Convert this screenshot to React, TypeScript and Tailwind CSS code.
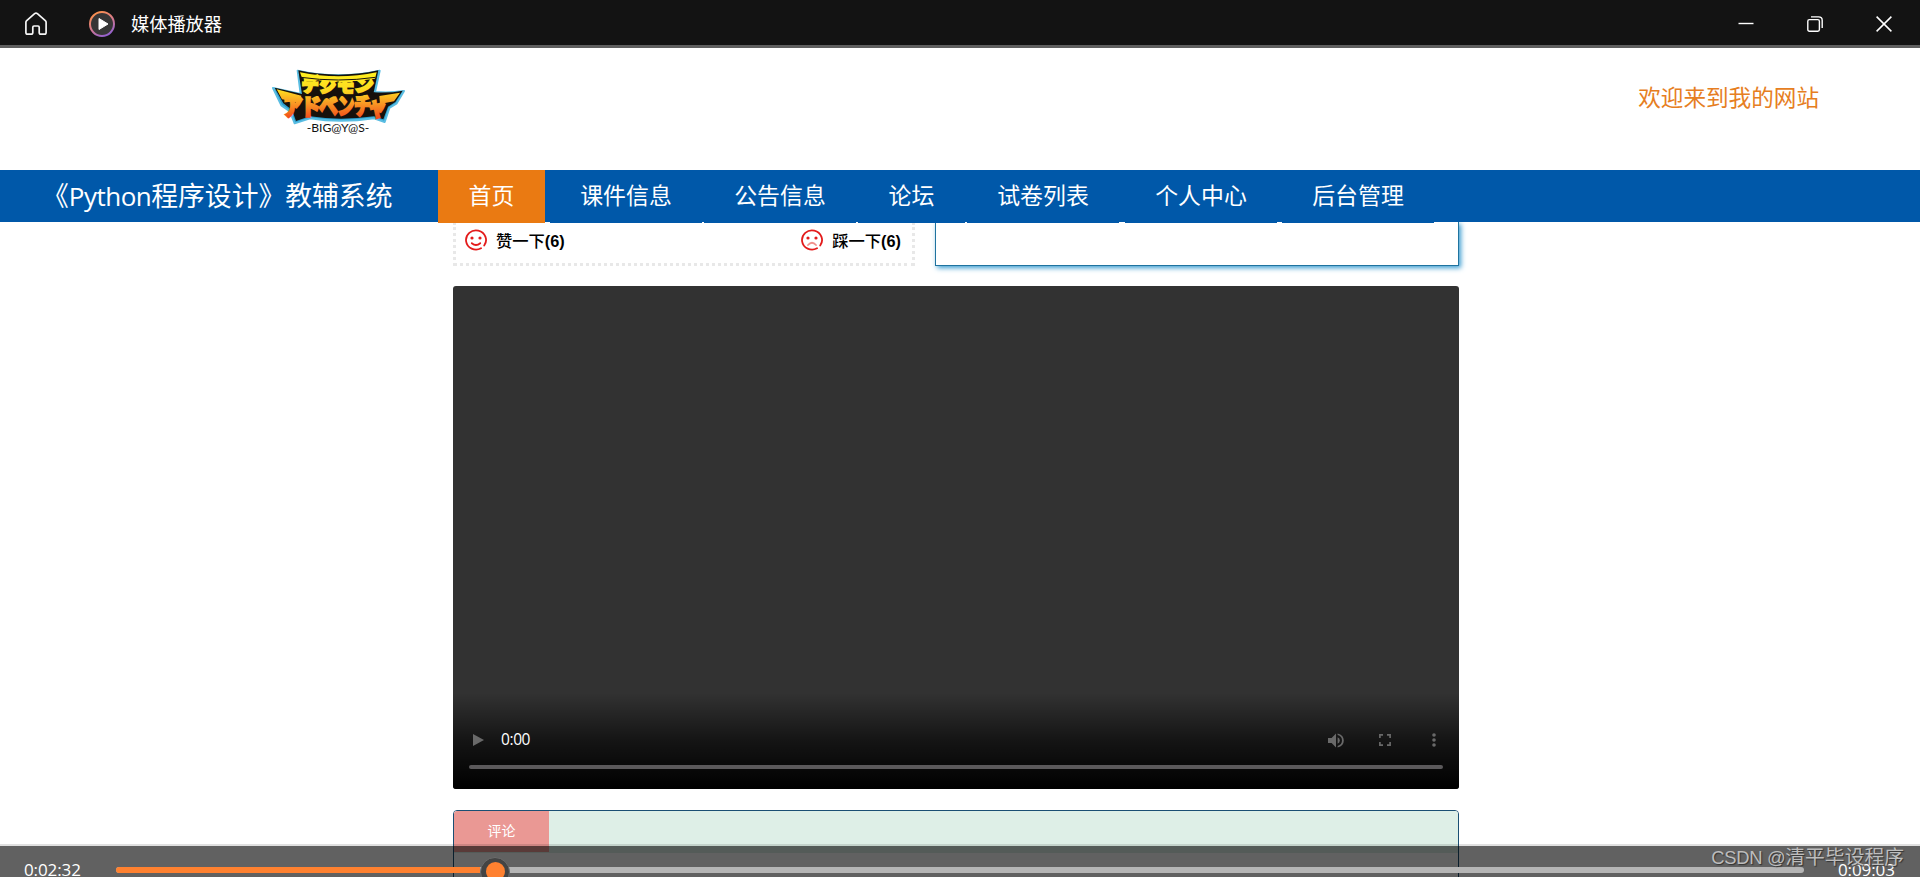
const navItems = [
  { label: "首页", className: "w-[107px] mr-[5px] bg-[#ea7a12]" },
  { label: "课件信息", className: "w-[152px] mr-[2px] bg-[#0058a9]" },
  { label: "公告信息", className: "w-[152px] mr-[2px] bg-[#0058a9]" },
  { label: "论坛", className: "w-[107px] mr-[2px] bg-[#0058a9]" },
  { label: "试卷列表", className: "w-[152px] mr-[6px] bg-[#0058a9]" },
  { label: "个人中心", className: "w-[152px] mr-[5px] bg-[#0058a9]" },
  { label: "后台管理", className: "w-[152px] bg-[#0058a9]" },
]

const topLetters = [
  { char: "デ", x: 126, y: 124, width: 50 },
  { char: "ジ", x: 179, y: 126, width: 49 },
  { char: "モ", x: 232, y: 126, width: 50 },
  { char: "ン", x: 284, y: 123, width: 56 },
]

const bottomLetters = [
  { char: "ア", x: 70, y: 196, width: 58 },
  { char: "ド", x: 123, y: 194, width: 60 },
  { char: "ベ", x: 177, y: 191, width: 56 },
  { char: "ン", x: 233, y: 191, width: 50 },
  { char: "チ", x: 283, y: 191, width: 50 },
  { char: "ャ", x: 324, y: 194, width: 56 },
]

function Logo() {
  return (
    <svg className="w-[160px] h-[100px]" viewBox="0 0 480 300">
      <defs>
        <linearGradient id="logoFill" gradientUnits="userSpaceOnUse" x1="0" y1="65" x2="0" y2="210">
          <stop offset="0" stopColor="#fff21f" />
          <stop offset="0.4" stopColor="#fdd820" />
          <stop offset="0.65" stopColor="#f99a24" />
          <stop offset="1" stopColor="#f0421a" />
        </linearGradient>
      </defs>
      <path
        d="M113 62Q235 90 359 62L345 126Q390 130 432 123L410 160L388 174L374 216L342 205Q240 220 150 205L104 220L90 184L64 166L39 114L122 132Z"
        fill="#2a9fd0"
        stroke="#5abde2"
        strokeWidth="6"
        strokeLinejoin="round"
      />
      <path
        d="M115 61Q235 87 355 61L341 127Q390 130 428 122L406 156L384 170L370 208L342 199Q240 213 150 199L108 213L96 180L70 160L44 113L126 132Z"
        fill="#17110c"
      />
      <path d="M120 67Q235 91 350 67L345 86Q235 104 126 84Z" fill="url(#logoFill)" />
      <path d="M50 118L124 137L118 156L66 148ZM358 138L420 128L402 154L360 162Z" fill="url(#logoFill)" />
      <g fill="url(#logoFill)" stroke="url(#logoFill)" strokeWidth="8" fontFamily="'Noto Sans CJK JP', sans-serif" fontWeight="700">
        {topLetters.map((l) => (
          <text key={l.x} x={l.x} y={l.y} fontSize="52" textLength={l.width} lengthAdjust="spacingAndGlyphs">{l.char}</text>
        ))}
        {bottomLetters.map((l) => (
          <text key={l.x} x={l.x} y={l.y} fontSize="68" textLength={l.width} lengthAdjust="spacingAndGlyphs">{l.char}</text>
        ))}
      </g>
      <path d="M123 82Q235 98 346 82" fill="none" stroke="#17110c" strokeWidth="3" />
      <path d="M126 133Q235 142 345 130" fill="none" stroke="#17110c" strokeWidth="4" />
      <text x="140" y="245" fontSize="37" textLength="188" lengthAdjust="spacingAndGlyphs" fill="#111" fontFamily="Lato, sans-serif">-BIG@Y@S-</text>
    </svg>
  )
}

function Face({ sad = false }: { sad?: boolean }) {
  return (
    <svg className="w-[22px] h-[22px]" viewBox="0 0 22 22" fill="none" stroke="#e31b1b" strokeWidth="1.8" strokeLinecap="round">
      <path d="M19.2 16.5A10 9.6 0 1 0 16 19.3" />
      <circle cx="7" cy="9" r="1.6" fill="#e31b1b" stroke="none" />
      <circle cx="15" cy="9" r="1.6" fill="#e31b1b" stroke="none" />
      {sad ? <path d="M7 16Q11 11.5 15 16" stroke="#f0908c" /> : <path d="M6.8 14.2Q11 17.8 15.2 14.2" />}
    </svg>
  )
}

function TitleBar() {
  return (
    <header className="flex h-12 items-center border-b-[3px] border-[#5f5f5f] bg-[#131313] text-white">
      <svg className="ml-6 mt-[2px] w-6 h-6" viewBox="0 0 24 24" fill="none" stroke="#f5f5f5" strokeWidth="1.7" strokeLinejoin="round">
        <path d="M1.9 10.2Q1.9 9.3 2.7 8.6L10.6 1.6Q12 .5 13.4 1.6L21.3 8.6Q22.1 9.3 22.1 10.2V20.4Q22.1 22.1 20.4 22.1H17Q15.2 22.1 15.2 20.4V15.2Q15.2 14 14 14H10Q8.8 14 8.8 15.2V20.4Q8.8 22.1 7 22.1H3.6Q1.9 22.1 1.9 20.4Z" />
      </svg>
      <svg className="ml-[40px] mt-[3px] w-7 h-7" viewBox="0 0 28 28">
        <defs>
          <linearGradient id="ring" x1="0.2" y1="0" x2="0.7" y2="1">
            <stop offset="0" stopColor="#ff9248" />
            <stop offset="0.5" stopColor="#d77b8c" />
            <stop offset="1" stopColor="#9160d0" />
          </linearGradient>
        </defs>
        <circle cx="14" cy="14" r="12" fill="#363636" stroke="url(#ring)" strokeWidth="2" />
        <path d="M11 8.5V19.5L20 14Z" fill="#fff" stroke="#fff" strokeLinejoin="round" />
      </svg>
      <span className="ml-[15px] mt-[5px] text-[18.2px] leading-6">媒体播放器</span>
      <div className="ml-auto mr-7 mt-[2px] flex gap-[53px]">
        <svg className="w-4 h-4" viewBox="0 0 16 16" stroke="#fff" strokeWidth="1.4">
          <path d="M0.5 7.5H15.5" />
        </svg>
        <svg className="w-4 h-4" viewBox="0 0 16 16" fill="none" stroke="#fff" strokeWidth="1.4">
          <rect x="0.8" y="3.6" width="11.6" height="11.6" rx="1.6" />
          <path d="M4 0.9H11.6Q15.2 0.9 15.2 4.4V12" />
        </svg>
        <svg className="w-4 h-4" viewBox="0 0 16 16" stroke="#fff" strokeWidth="1.5">
          <path d="M0.6 0.6L15.4 15.4M15.4 0.6L0.6 15.4" />
        </svg>
      </div>
    </header>
  )
}

function VideoPanel() {
  return (
    <section className="mt-5 flex h-[503px] flex-col justify-end overflow-hidden rounded-[3px] bg-[#323232]">
      <div className="flex h-[96px] flex-col justify-end bg-linear-to-b from-transparent via-black/60 to-black px-4 pb-5">
        <div className="flex h-8 items-center pl-1">
          <svg className="w-[11px] h-3" viewBox="0 0 11 12">
            <path d="M0 0V12L11 6Z" fill="#696969" />
          </svg>
          <span className="ml-[17px] font-['Open_Sans','Noto_Sans',sans-serif] text-[15.5px] tracking-[-0.4px] text-white">0:00</span>
          <div className="ml-auto mr-[7px] flex items-center">
            <svg className="w-4 h-[15px]" viewBox="0 0 16 15" fill="#696969">
              <path d="M0 5V10H3.6L8 14.4V0.6L3.6 5Z" />
              <path d="M9.6 4.2Q11.8 5.2 11.8 7.5T9.6 10.8Z" />
              <path d="M9.6 0.4V2.1Q14 3.4 14 7.5T9.6 12.9V14.6Q15.8 13 15.8 7.5T9.6 0.4Z" />
            </svg>
            <svg className="ml-[35px] w-3 h-3" viewBox="0 0 12 12" fill="none" stroke="#696969" strokeWidth="1.7">
              <path d="M0.9 4V0.9H4M8 0.9H11.1V4M11.1 8V11.1H8M4 11.1H0.9V8" />
            </svg>
            <svg className="ml-[41px] w-1 h-[14px]" viewBox="0 0 4 14" fill="#696969">
              <circle cx="2" cy="2" r="1.8" />
              <circle cx="2" cy="7" r="1.8" />
              <circle cx="2" cy="12" r="1.8" />
            </svg>
          </div>
        </div>
        <div className="mt-[9px] h-1 rounded-full bg-[#5b595b]"></div>
      </div>
    </section>
  )
}

export default function App() {
  return (
    <div className="relative h-[877px] w-full overflow-hidden bg-white font-['Liberation_Sans','Noto_Sans_CJK_SC',sans-serif]">
      <TitleBar />

      {/* Site banner */}
      <div className="flex h-[122px] justify-between pl-[260px] pr-[101px]">
        <div className="pt-[2px]">
          <Logo />
        </div>
        <p className="pt-[33px] text-[22.6px] leading-9 text-[#e67e22]">欢迎来到我的网站</p>
      </div>

      {/* Main navigation */}
      <nav className="relative z-10 flex h-[52px] bg-[#0058a9] text-white">
        <h1 className="w-[438px] shrink-0 whitespace-nowrap pl-[42px] text-[26.8px] leading-[53px]">
          《<span className="font-['Open_Sans','Noto_Sans',sans-serif] font-medium text-[26px] tracking-[-0.5px]">Python</span>程序设计》教辅系统
        </h1>
        {navItems.map((item) => (
          <a key={item.label} className={`h-[53px] shrink-0 text-center text-[22.9px] leading-[52px] ${item.className}`}>
            {item.label}
          </a>
        ))}
      </nav>

      <main className="ml-[453px] w-[1006px]">
        <div className="flex h-11 justify-between">
          <div className="flex w-[462px] justify-between border-[3px] border-t-0 border-dotted border-[#e8e8e8] pl-[9px] pr-[11px] text-base font-medium text-black">
            <div className="flex h-9 items-center gap-[9px]">
              <Face />
              <span className="mt-[3px] text-[16.3px]">赞一下<b>(6)</b></span>
            </div>
            <div className="flex h-9 items-center gap-[9px]">
              <Face sad />
              <span className="mt-[3px] text-[16.3px]">踩一下<b>(6)</b></span>
            </div>
          </div>
          <div className="w-[524px] border border-t-0 border-[#1f739f] shadow-[2px_2px_5px_#3b9cd0]"></div>
        </div>

        <VideoPanel />

        {/* Comments */}
        <section className="mt-[21px] h-[90px] rounded-t-[4px] border border-[#1b4f74]">
          <div className="flex h-[42px] rounded-t-[3px] bg-[#deefe7]">
            <div className="h-[41px] w-[95px] rounded-tl-[3px] bg-[#ea9894] text-center text-[14px] leading-[41px] text-white">评论</div>
          </div>
        </section>
      </main>

      {/* Player controls */}
      <div className="absolute inset-x-0 bottom-0 z-20 h-[33px] border-t-2 border-black/12 bg-black/62 bg-clip-padding">
        <div className="flex items-start pt-[21px]">
          <span className="mt-[-9px] w-[116px] shrink-0 font-['Open_Sans','Noto_Sans',sans-serif] pl-6 text-[17px] leading-6 tracking-[-0.1px] text-white">0:02:32</span>
          <div className="flex h-[6px] w-[1688px] shrink-0 items-center rounded-full bg-[#b5b5b5]">
            <div className="h-full w-[364px] rounded-l-full bg-[#ff8130]"></div>
            <div className="mt-[3px] flex h-[30px] w-[30px] shrink-0 items-center justify-center rounded-full border border-[#6c6c6c] bg-[#444]">
              <div className="h-[19px] w-[19px] rounded-full bg-[#ff8130]"></div>
            </div>
          </div>
          <span className="mt-[-9px] font-['Open_Sans','Noto_Sans',sans-serif] pl-[34px] text-[17px] leading-6 tracking-[-0.1px] text-white">0:09:03</span>
        </div>
      </div>
      <div className="absolute bottom-[5px] right-[16px] z-30 whitespace-nowrap text-[19.8px] leading-7 text-[#bdbdbd] [text-shadow:1px_1px_1px_#333]">
        <span className="text-[18.4px] tracking-[-0.3px]">CSDN @</span>清平毕设程序
      </div>
    </div>
  )
}
